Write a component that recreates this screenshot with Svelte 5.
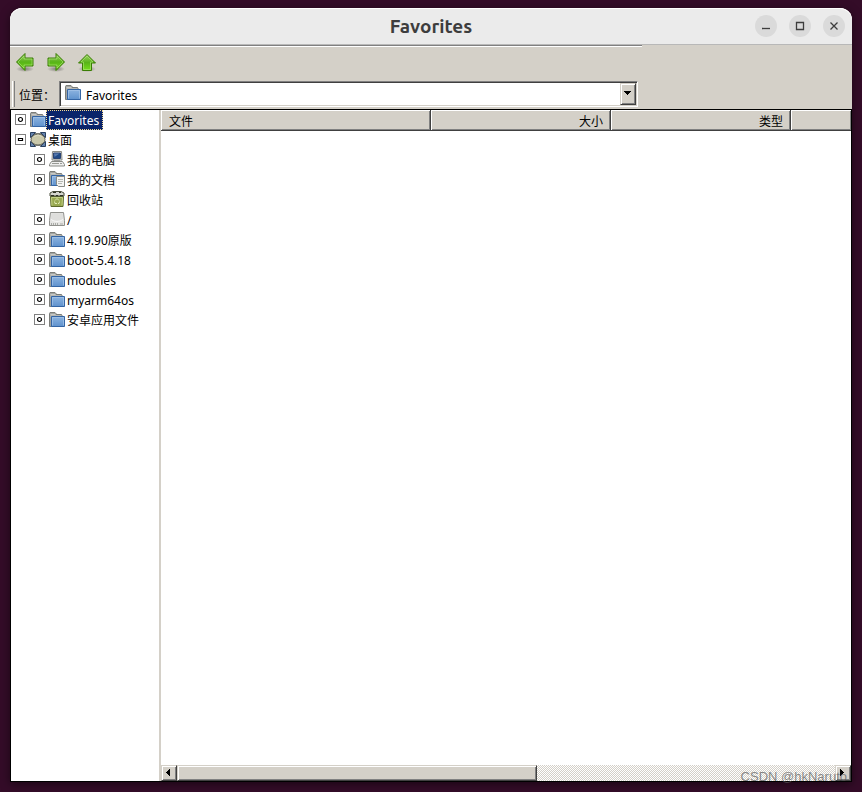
<script lang="ts">
    type Node = {
        name: string;
        icon: string;
        depth: number;
        expandable: boolean;
    };

    let places: Node[] = [
        { name: "Favorites", icon: "folder", depth: 0, expandable: true },
        { name: "桌面", icon: "desktop", depth: 0, expandable: true },
        { name: "我的电脑", icon: "computer", depth: 1, expandable: true },
        { name: "我的文档", icon: "documents", depth: 1, expandable: true },
        { name: "回收站", icon: "trash", depth: 1, expandable: false },
        { name: "/", icon: "drive", depth: 1, expandable: true },
        { name: "4.19.90原版", icon: "folder", depth: 1, expandable: true },
        { name: "boot-5.4.18", icon: "folder", depth: 1, expandable: true },
        { name: "modules", icon: "folder", depth: 1, expandable: true },
        { name: "myarm64os", icon: "folder", depth: 1, expandable: true },
        { name: "安卓应用文件", icon: "folder", depth: 1, expandable: true },
    ];

    let directions = [
        { label: "Back", name: "left" },
        { label: "Forward", name: "right" },
        { label: "Up", name: "up" },
    ];

    let selected = $state("Favorites");
    let location = $state("Favorites");
    let desktopOpen = $state(true);

    let visible = $derived(places.filter((p) => p.depth === 0 || desktopOpen));

    function select(name: string) {
        selected = name;
        location = name;
    }

    function toggle(node: Node) {
        if (node.icon === "desktop") {
            desktopOpen = !desktopOpen;
        }
    }
</script>

{#snippet icon(name: string)}
    <svg class="icon {name}" viewBox="0 0 16 16" aria-hidden="true">
        {#if name === "folder" || name === "documents"}
            <path d="M.5 14.5v-13l.5-1h5l1 1v1h5.500l.5.500v11z" fill="#a3a4a0" stroke="#7b7d79" />
            <path d="M1.500 2.500h5M1.500 4h11" stroke="#c9cac7" />
            <path d="M2.500 4.500h13v10h-13z" fill="url(#blue)" stroke="#3465a4" />
            <path d="M3.500 13.500v-8h11v8" fill="none" stroke="#a7c5e8" stroke-opacity=".7" />
            {#if name === "documents"}
                <path d="M7.500 5.500h8v10h-6l-2-2z" fill="#f4f4f2" stroke="#888a85" />
                <path d="M9 8.500h5M9 10.500h5M9 12.500h4" stroke="#b5b7b2" />
            {/if}
        {:else if name === "desktop"}
            <path d="M1 2h14v13H1z" fill="#83857c" />
            <path d="M.5 1.500h5l-5 5zM15.500 1.500h-5l5 5zM.5 15.500h5l-5-5zM15.500 15.500h-5l5-5z" fill="#6583ad" stroke="#29405f" />
            <ellipse cx="8" cy="8.500" rx="7" ry="5.500" fill="#c9c8aa" stroke="#60625a" />
            <path d="M4 5.500q4-3 8 0" fill="none" stroke="#dcdbc4" />
        {:else if name === "computer"}
            <path d="M3.500.5h9l.5 8.500H3z" fill="#e4e4e0" stroke="#888a85" />
            <path d="M4.500 2h7v5.500h-7z" fill="#204a87" stroke="#2b4473" />
            <path d="M5 2.500h5.500L5.500 6z" fill="#5578ad" />
            <path d="M5 9.500h6v1H5z" fill="#777" />
            <path d="M2.500 10.500h11l2 3v1.500H.5v-1.500z" fill="#eee" stroke="#888a85" />
            <path d="M3 12.500h7M11 12.500h2" stroke="#999b96" />
        {:else if name === "trash"}
            <path d="M1.500 5.500h13l-.5 10H2z" fill="#98a850" stroke="#5b682b" />
            <path d="M3 14.500l-.5-8h11l-.5 8" fill="none" stroke="#c3d184" />
            <path d="M1 2l3-1.500h8L15 2v3H1z" fill="#d5d6ce" stroke="#494d3b" />
            <path d="M2 4.500h3M7 4.500h2M11 4.500h3M4 1.500h3M10 1.500h2" stroke="#2e3126" />
            <path d="M6 9.500l2-2 2 2M5.500 10.500l.5 2h2M10.500 10.500l-.5 2H9" fill="none" stroke="#e0eab4" />
        {:else if name === "drive"}
            <path d="M1.500 1.500h13l1 8v5H.5v-5z" fill="#e5e5e3" stroke="#90918d" />
            <path d="M2.500 2.500h11l1 7h-13z" fill="#dededc" />
            <path d="M2 8.500q6 4 12 0" fill="none" stroke="#f8f8f8" />
            <path d="M2.500 12v2M4.500 12v2M6.500 12v2M8.500 12v2M11 13h3" stroke="#aaaba7" />
        {/if}
    </svg>
{/snippet}

<svg class="defs" aria-hidden="true">
    <defs>
        <linearGradient id="blue" x1="0" y1="0" x2="0" y2="1">
            <stop offset="0" stop-color="#8db4e0" />
            <stop offset="1" stop-color="#5f92cd" />
        </linearGradient>
        <radialGradient id="shade">
            <stop offset="0" stop-color="#000" stop-opacity=".4" />
            <stop offset="1" stop-color="#000" stop-opacity="0" />
        </radialGradient>
        <linearGradient id="green" x1="0" y1="0" x2="0" y2="1">
            <stop offset="0" stop-color="#9fd268" />
            <stop offset=".5" stop-color="#58b318" />
            <stop offset="1" stop-color="#76df1b" />
        </linearGradient>
    </defs>
</svg>

<div class="screen">
    <div class="window">
        <header class="titlebar">
            <h1>Favorites</h1>
            <div class="window-controls">
                <button aria-label="Minimize">
                    <svg viewBox="0 0 22 22"><path d="M7 13.500h8" /></svg>
                </button>
                <button aria-label="Maximize">
                    <svg viewBox="0 0 22 22"><path d="M7.500 7.500h7v7h-7z" /></svg>
                </button>
                <button aria-label="Close">
                    <svg viewBox="0 0 22 22"><path d="M7.500 7.500l7 7M14.500 7.500l-7 7" /></svg>
                </button>
            </div>
        </header>

        <div class="toolbars">
            <nav class="toolbar">
                {#each directions as dir}
                    <button aria-label={dir.label}>
                        <svg viewBox="0 0 20 20">
                            <ellipse cx="10" cy="17" rx="9" ry="3" fill="url(#shade)" />
                            {#if dir.name === "left"}
                                <path class="arrow" d="M1.500 10l8.500-8.500v4.500h8v8h-8v4.500z" />
                                <path class="shine" d="M3 10l6-6v3h8v6h-8v3z" />
                            {:else if dir.name === "right"}
                                <path class="arrow" d="M18.500 10l-8.500-8.500v4.500h-8v8h8v4.500z" />
                                <path class="shine" d="M17 10l-6-6v3h-8v6h8v3z" />
                            {:else}
                                <path class="arrow" d="M10 2.500l8.500 8.500h-4v7.500h-9v-7.500h-4z" />
                                <path class="shine" d="M10 4l6 6h-2.500v7.500h-7v-7.500h-2.500z" />
                            {/if}
                        </svg>
                    </button>
                {/each}
            </nav>
            <div class="location">
                <span class="grip"></span>
                <label for="location">位置：</label>
                <div class="combo">
                    {@render icon("folder")}
                    <input id="location" type="text" bind:value={location} />
                    <button class="raised" aria-label="Show locations">
                        <svg viewBox="0 0 7 4"><path d="M0 0h7v1H6v1H5v1H4v1H3V3H2V2H1V1H0z" /></svg>
                    </button>
                </div>
            </div>
        </div>

        <main class="content">
            <ul class="tree">
                {#each visible as node}
                    <li class:child={node.depth > 0}>
                        {#if node.expandable}
                            <button
                                class="expander"
                                aria-label="Expand {node.name}"
                                onclick={() => toggle(node)}
                            >
                                <svg viewBox="0 0 9 9">
                                    {#if node.icon === "desktop" && desktopOpen}
                                        <path d="M2.500 3.500h4v2h-4z" />
                                    {:else}
                                        <circle cx="4.500" cy="4.500" r="2" />
                                    {/if}
                                </svg>
                            </button>
                        {:else}
                            <span class="spacer"></span>
                        {/if}
                        {@render icon(node.icon)}
                        <button
                            class="name"
                            class:selected={node.name === selected}
                            onclick={() => select(node.name)}
                        >{node.name}</button>
                    </li>
                {/each}
            </ul>

            <section class="files">
                <table>
                    <colgroup>
                        <col class="col-file" />
                        <col class="col-info" />
                        <col class="col-info" />
                        <col />
                    </colgroup>
                    <thead>
                        <tr>
                            <th>文件</th>
                            <th class="right">大小</th>
                            <th class="right">类型</th>
                            <th></th>
                        </tr>
                    </thead>
                </table>
                <div class="scrollbar">
                    <button class="raised" aria-label="Scroll left">
                        <svg viewBox="0 0 4 7"><path d="M4 0v7H3V6H2V5H1V4H0V3h1V2h1V1h1V0z" /></svg>
                    </button>
                    <div class="track">
                        <div class="thumb raised"></div>
                    </div>
                    <button class="raised" aria-label="Scroll right">
                        <svg viewBox="0 0 4 7"><path d="M0 0v7h1V6h1V5h1V4h1V3H3V2H2V1H1V0z" /></svg>
                    </button>
                </div>
            </section>
            <span class="watermark">CSDN @hkNaruto</span>
        </main>
    </div>
</div>

<style>
    :global(body) {
        margin: 0;
        background: #340c28;
    }

    .defs {
        position: absolute;
        width: 0;
        height: 0;
    }

    .screen {
        box-sizing: border-box;
        display: flex;
        min-height: 100vh;
        padding: 8px 10px 10px;
        font: 12px/20px "Noto Sans", "Noto Sans CJK SC", sans-serif;
        color: #000;
    }

    .window {
        flex: 1;
        min-width: 0;
        display: flex;
        flex-direction: column;
        background: #d4d0c8;
        border-radius: 12px 12px 0 0;
        box-shadow: 0 2px 10px rgba(0, 0, 0, 0.5);
    }

    button {
        padding: 0;
        border: none;
        background: none;
        font: inherit;
        color: inherit;
    }

    svg {
        display: block;
        flex: none;
    }

    .titlebar {
        display: grid;
        grid-template-columns: 1fr auto 1fr;
        align-items: center;
        height: 36px;
        background: #ebebeb;
        border-bottom: 1px solid #b8b8b8;
        border-radius: 12px 12px 0 0;
        box-shadow: inset 0 1px #fff;
    }

    h1 {
        grid-column: 2;
        margin: 0;
        font: bold 19px/24px Ubuntu, "Open Sans", "Noto Sans", sans-serif;
        color: #3d3d3d;
    }

    .window-controls {
        display: flex;
        justify-content: flex-end;
        gap: 12px;
        padding-right: 7px;
    }

    .window-controls button {
        width: 22px;
        height: 22px;
        border-radius: 50%;
        background: #dadada;
    }

    .window-controls path {
        fill: none;
        stroke: #3d3d3d;
        stroke-width: 1.3;
    }

    .toolbars {
        width: 100%;
        max-width: 632px;
        height: 64px;
    }

    .toolbar {
        display: flex;
        align-items: center;
        gap: 11px;
        height: 32px;
        padding-left: 5px;
        border-top: 1px solid #808080;
        box-shadow: inset 0 1px #fff;
    }

    .toolbar svg {
        width: 20px;
        height: 20px;
    }

    .arrow {
        fill: url(#green);
        stroke: #3a7d04;
    }

    .shine {
        fill: none;
        stroke: #b5e884;
        stroke-opacity: 0.55;
    }

    .location {
        display: flex;
        align-items: center;
        padding: 3px 4px 0 2px;
    }

    .grip {
        width: 1px;
        height: 26px;
        margin-right: 4px;
        border-left: 1px solid #fff;
        border-right: 1px solid #808080;
    }

    label {
        width: 40px;
        padding-top: 4px;
        white-space: nowrap;
    }

    .combo {
        flex: 1;
        display: flex;
        align-items: center;
        height: 22px;
        border: 1px solid;
        border-color: #808080 #fff #fff #808080;
        padding: 1px;
        background: #fff;
        box-shadow: inset 1px 1px #404040, inset -1px -1px #d4d0c8;
    }

    .combo input {
        flex: 1;
        min-width: 0;
        padding: 4px 0 0;
        border: none;
        outline: none;
        background: none;
        font: inherit;
        line-height: 18px;
    }

    .raised {
        box-sizing: border-box;
        display: flex;
        align-items: center;
        justify-content: center;
        width: 16px;
        height: 16px;
        padding: 0 2px 2px 0;
        background: #d4d0c8;
        border: 1px solid;
        border-color: #d4d0c8 #404040 #404040 #d4d0c8;
        box-shadow: inset 1px 1px #fff, inset -1px -1px #808080;
    }

    .combo .raised {
        height: 22px;
    }

    .combo .raised svg {
        width: 7px;
        height: 4px;
    }

    .content {
        position: relative;
        flex: 1;
        display: flex;
        border: 1px solid #000;
        background: #fff;
    }

    .tree {
        box-sizing: border-box;
        width: 150px;
        margin: 0;
        padding: 0;
        list-style: none;
        border-right: 2px solid #d4d0c8;
    }

    li {
        display: flex;
        align-items: center;
        height: 20px;
        padding-left: 4px;
    }

    .child {
        padding-left: 23px;
    }

    .expander,
    .spacer {
        box-sizing: border-box;
        width: 11px;
        height: 11px;
        margin: 0 4px 1px 0;
    }

    .expander {
        border: 1px solid #808080;
        background: #fff;
    }

    .expander svg {
        width: 9px;
        height: 9px;
        fill: none;
        stroke: #000;
        stroke-width: 1.2;
    }

    .icon {
        width: 16px;
        height: 16px;
        margin-bottom: 2px;
    }

    .folder {
        margin-bottom: 0;
    }

    .combo .icon {
        margin: 0 5px 2px 4px;
    }

    .name {
        height: 20px;
        padding: 2px 2px 0;
        line-height: 18px;
        white-space: nowrap;
    }

    .selected {
        min-width: 57px;
        background: #0a246a;
        color: #fff;
        text-align: left;
        outline: 1px dotted #f5db95;
        outline-offset: -1px;
    }

    .files {
        flex: 1;
        min-width: 0;
        display: flex;
        flex-direction: column;
        justify-content: space-between;
    }

    table {
        width: 100%;
        table-layout: fixed;
        border-collapse: separate;
        border-spacing: 0;
    }

    .col-file {
        width: 270px;
    }

    .col-info {
        width: 180px;
    }

    th {
        height: 16px;
        padding: 4px 7px 0 8px;
        line-height: 16px;
        text-align: left;
        font-weight: normal;
        background: #d4d0c8;
        border-right: 1px solid #404040;
        border-bottom: 1px solid #404040;
        box-shadow: inset 1px 1px #fff, inset -1px -1px #808080;
    }

    th:last-child {
        border-right: none;
    }

    .right {
        text-align: right;
    }

    .scrollbar {
        display: flex;
        height: 16px;
    }

    .scrollbar .raised svg {
        width: 4px;
        height: 7px;
    }

    .track {
        flex: 1;
        background: repeating-conic-gradient(#d4d0c8 0 25%, #fff 0 50%) 0 0 / 2px 2px;
    }

    .track .thumb {
        width: 54.7%;
    }

    .watermark {
        position: absolute;
        right: 4px;
        bottom: -6px;
        font: 13px/20px "Liberation Sans", sans-serif;
        color: rgba(90, 90, 90, 0.7);
        pointer-events: none;
    }
</style>
